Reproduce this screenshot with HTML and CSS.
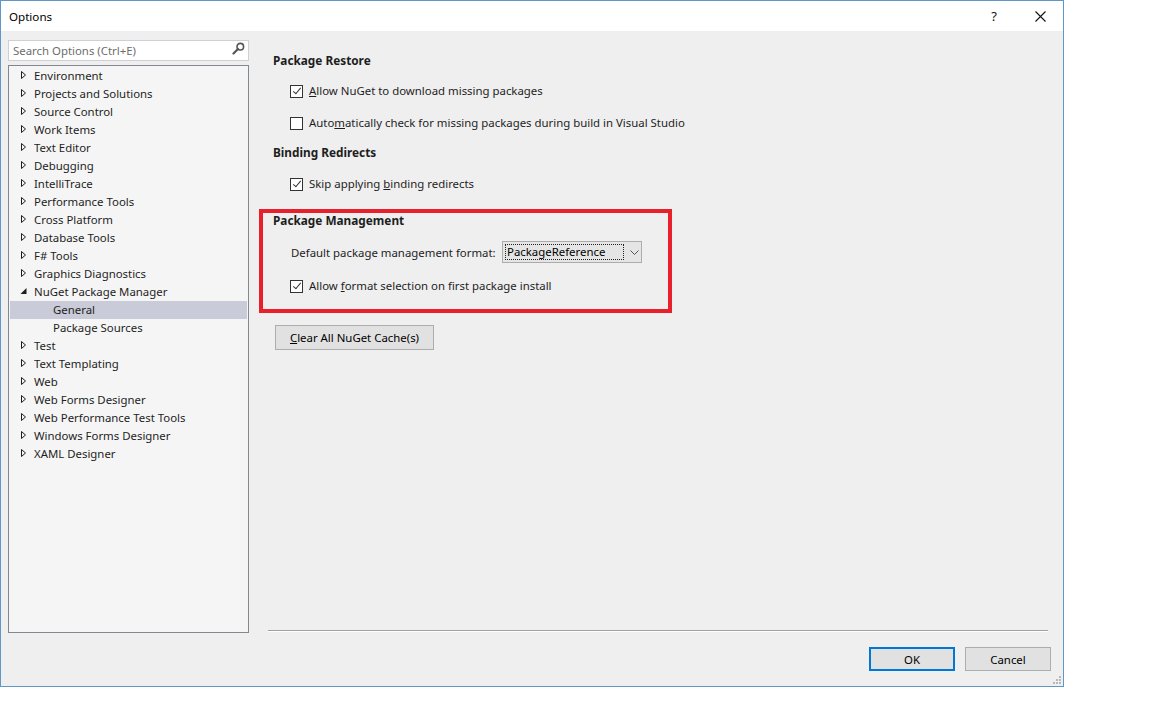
FILE: index.html
```html
<!DOCTYPE html>
<html>
<head>
<meta charset="utf-8">
<title>Options</title>
<link rel="stylesheet" href="styles.css">
</head>
<body>
<div class="window">
  <div class="titlebar">
    <span class="title">Options</span>
    <span class="tb-help">?</span>
    <span class="tb-close"><svg width="11" height="11" viewBox="0 0 11 11"><path d="M0.5 0.5 L10.5 10.5 M10.5 0.5 L0.5 10.5" stroke="#111" stroke-width="1.1" fill="none"/></svg></span>
  </div>
  <div class="client">
    <div class="main">
      <div class="leftpane">
        <div class="search">
          <span class="search-ph">Search Options (Ctrl+E)</span>
          <svg class="search-icon" width="13" height="13" viewBox="0 0 13 13"><circle cx="8.3" cy="4.7" r="3.3" stroke="#555" stroke-width="1.6" fill="none"/><path d="M6 7 L1.5 11.5" stroke="#555" stroke-width="2.2" stroke-linecap="round"/></svg>
        </div>
        <div class="tree">
          <div class="node"><svg class="arrow" viewBox="0 0 14 18"><path d="M1.5 5.5 L5.5 9 L1.5 12.5 Z" fill="none" stroke="#1e1e1e"/></svg>Environment</div>
          <div class="node"><svg class="arrow" viewBox="0 0 14 18"><path d="M1.5 5.5 L5.5 9 L1.5 12.5 Z" fill="none" stroke="#1e1e1e"/></svg>Projects and Solutions</div>
          <div class="node"><svg class="arrow" viewBox="0 0 14 18"><path d="M1.5 5.5 L5.5 9 L1.5 12.5 Z" fill="none" stroke="#1e1e1e"/></svg>Source Control</div>
          <div class="node"><svg class="arrow" viewBox="0 0 14 18"><path d="M1.5 5.5 L5.5 9 L1.5 12.5 Z" fill="none" stroke="#1e1e1e"/></svg>Work Items</div>
          <div class="node"><svg class="arrow" viewBox="0 0 14 18"><path d="M1.5 5.5 L5.5 9 L1.5 12.5 Z" fill="none" stroke="#1e1e1e"/></svg>Text Editor</div>
          <div class="node"><svg class="arrow" viewBox="0 0 14 18"><path d="M1.5 5.5 L5.5 9 L1.5 12.5 Z" fill="none" stroke="#1e1e1e"/></svg>Debugging</div>
          <div class="node"><svg class="arrow" viewBox="0 0 14 18"><path d="M1.5 5.5 L5.5 9 L1.5 12.5 Z" fill="none" stroke="#1e1e1e"/></svg>IntelliTrace</div>
          <div class="node"><svg class="arrow" viewBox="0 0 14 18"><path d="M1.5 5.5 L5.5 9 L1.5 12.5 Z" fill="none" stroke="#1e1e1e"/></svg>Performance Tools</div>
          <div class="node"><svg class="arrow" viewBox="0 0 14 18"><path d="M1.5 5.5 L5.5 9 L1.5 12.5 Z" fill="none" stroke="#1e1e1e"/></svg>Cross Platform</div>
          <div class="node"><svg class="arrow" viewBox="0 0 14 18"><path d="M1.5 5.5 L5.5 9 L1.5 12.5 Z" fill="none" stroke="#1e1e1e"/></svg>Database Tools</div>
          <div class="node"><svg class="arrow" viewBox="0 0 14 18"><path d="M1.5 5.5 L5.5 9 L1.5 12.5 Z" fill="none" stroke="#1e1e1e"/></svg>F# Tools</div>
          <div class="node"><svg class="arrow" viewBox="0 0 14 18"><path d="M1.5 5.5 L5.5 9 L1.5 12.5 Z" fill="none" stroke="#1e1e1e"/></svg>Graphics Diagnostics</div>
          <div class="node"><svg class="arrow" viewBox="0 0 14 18"><path d="M6.5 6 L6.5 12 L0.5 12 Z" fill="#1e1e1e"/></svg>NuGet Package Manager</div>
          <div class="node child selected">General</div>
          <div class="node child">Package Sources</div>
          <div class="node"><svg class="arrow" viewBox="0 0 14 18"><path d="M1.5 5.5 L5.5 9 L1.5 12.5 Z" fill="none" stroke="#1e1e1e"/></svg>Test</div>
          <div class="node"><svg class="arrow" viewBox="0 0 14 18"><path d="M1.5 5.5 L5.5 9 L1.5 12.5 Z" fill="none" stroke="#1e1e1e"/></svg>Text Templating</div>
          <div class="node"><svg class="arrow" viewBox="0 0 14 18"><path d="M1.5 5.5 L5.5 9 L1.5 12.5 Z" fill="none" stroke="#1e1e1e"/></svg>Web</div>
          <div class="node"><svg class="arrow" viewBox="0 0 14 18"><path d="M1.5 5.5 L5.5 9 L1.5 12.5 Z" fill="none" stroke="#1e1e1e"/></svg>Web Forms Designer</div>
          <div class="node"><svg class="arrow" viewBox="0 0 14 18"><path d="M1.5 5.5 L5.5 9 L1.5 12.5 Z" fill="none" stroke="#1e1e1e"/></svg>Web Performance Test Tools</div>
          <div class="node"><svg class="arrow" viewBox="0 0 14 18"><path d="M1.5 5.5 L5.5 9 L1.5 12.5 Z" fill="none" stroke="#1e1e1e"/></svg>Windows Forms Designer</div>
          <div class="node"><svg class="arrow" viewBox="0 0 14 18"><path d="M1.5 5.5 L5.5 9 L1.5 12.5 Z" fill="none" stroke="#1e1e1e"/></svg>XAML Designer</div>
        </div>
      </div>
      <div class="rightpane">
        <div class="options">
          <div class="heading h-restore">Package Restore</div>
          <div class="check row1"><span class="box checked"></span><span><u>A</u>llow NuGet to download missing packages</span></div>
          <div class="check row2"><span class="box"></span><span>Auto<u>m</u>atically check for missing packages during build in Visual Studio</span></div>
          <div class="heading h-binding">Binding Redirects</div>
          <div class="check row3"><span class="box checked"></span><span>Skip applying <u>b</u>inding redirects</span></div>
          <div class="heading h-mgmt">Package Management</div>
          <div class="combo-row">
            <span class="combo-label">Default package management format:</span>
            <div class="combo"><span class="combo-value">PackageReference</span><svg class="combo-arrow" width="9" height="5" viewBox="0 0 9 5"><path d="M0.5 0.5 L4.5 4.5 L8.5 0.5" stroke="#555" fill="none"/></svg></div>
          </div>
          <div class="check row4"><span class="box checked"></span><span>Allow <u>f</u>ormat selection on first package install</span></div>
          <button class="btn clear"><u>C</u>lear All NuGet Cache(s)</button>
          <div class="highlight"></div>
        </div>
        <div class="separator"></div>
      </div>
    </div>
    <div class="footer">
      <button class="btn ok">OK</button>
      <button class="btn cancel">Cancel</button>
    </div>
    <svg class="grip" width="10" height="10" viewBox="0 0 10 10"><g fill="#b8b8b8"><rect x="7" y="1" width="2" height="2"/><rect x="4" y="4" width="2" height="2"/><rect x="7" y="4" width="2" height="2"/><rect x="1" y="7" width="2" height="2"/><rect x="4" y="7" width="2" height="2"/><rect x="7" y="7" width="2" height="2"/></g></svg>
  </div>
</div>
</body>
</html>
```
FILE: styles.css
```css
* { box-sizing: border-box; }
html, body { margin: 0; padding: 0; background: #ffffff; }
body {
  font-family: "Segoe UI", "Noto Sans", "Open Sans", sans-serif;
  font-size: 11.4px;
  color: #1e1e1e;
}
.window {
  width: 1064px;
  height: 687px;
  border: 1px solid #5f97c9;
  background: #efefef;
  display: flex;
  flex-direction: column;
}
.titlebar {
  height: 30px;
  background: #ffffff;
  display: flex;
  align-items: center;
  padding-left: 8px;
  flex: none;
}
.title { font-size: 11.6px; color: #000; flex: 1; }
.tb-help { font-size: 13px; color: #111; width: 46px; text-align: center; margin-right: 0; }
.tb-close { width: 46px; display: flex; justify-content: center; align-items: center; }
.client {
  flex: 1;
  padding: 9px 12px 0 7px;
  display: flex;
  flex-direction: column;
  position: relative;
}
.main { display: flex; height: 593px; }
.leftpane { width: 241px; display: flex; flex-direction: column; }
.search {
  height: 21px;
  border: 1px solid #cfd0d6;
  background: #ffffff;
  display: flex;
  align-items: center;
  padding: 0 2px 0 4px;
  margin-bottom: 4px;
}
.search-ph { flex: 1; color: #6d6d6d; white-space: nowrap; }
.search-icon { margin-right: 1px; margin-top: -4px; }
.tree {
  height: 568px;
  border: 1px solid #828790;
  background: #f5f5f5;
  padding: 1px 1px 0 1px;
}
.node {
  height: 18px;
  line-height: 17px;
  display: flex;
  align-items: flex-start;
  padding-left: 10px;
  white-space: nowrap;
}
.node.child { padding-left: 43px; }
.node.selected { background: #cacbd8; }
.arrow {
  width: 14px;
  height: 18px;
  flex: none;
  margin-top: -1px;
}
.rightpane {
  margin-left: 19px;
  width: 780px;
  display: flex;
  flex-direction: column;
}
.options {
  flex: 1;
  position: relative;
  padding: 12px 0 0 5px;
}
.heading { font-weight: bold; font-size: 11.8px; height: 16px; line-height: 16px; color: #1e1e1e; }
.check {
  display: flex;
  align-items: center;
  height: 16px;
  line-height: 16px;
  padding-left: 17px;
  white-space: nowrap;
}
.box {
  width: 13px; height: 13px;
  border: 1px solid #333;
  background: #ffffff;
  margin-right: 6px;
  position: relative;
  flex: none;
}
.box.checked::after {
  content: "";
  position: absolute;
  left: 3.5px; top: 0.5px;
  width: 3px; height: 7px;
  border-right: 1.3px solid #333;
  border-bottom: 1.3px solid #333;
  transform: rotate(40deg);
}
.row1 { margin-top: 15px; }
.row2 { margin-top: 16px; }
.h-binding { margin-top: 13px; }
.row3 { margin-top: 16px; }
.h-mgmt { margin-top: 20px; }
.combo-row {
  margin-top: 13px;
  display: flex;
  align-items: center;
  height: 22px;
  padding-left: 18px;
}
.combo-label { width: 211px; white-space: nowrap; }
.combo {
  width: 140px;
  height: 22px;
  background: #e5e5e5;
  border: 1px solid #acacac;
  display: flex;
  align-items: center;
  padding: 2px;
}
.combo-value {
  width: 119px;
  height: 16px;
  line-height: 14px;
  border: 1px dotted #222;
  padding-left: 1px;
  color: #000;
}
.combo-arrow { margin-left: 6px; }
.row4 { margin-top: 15px; }
.btn {
  font-family: "Segoe UI", "Noto Sans", "Open Sans", sans-serif;
  font-size: 11.4px;
  color: #000;
  background: #e1e1e1;
  border: 1px solid #adadad;
  padding: 0;
  height: 24px;
}
.clear { margin-top: 31px; margin-left: 2px; width: 159px; height: 25px; display: block; }
.highlight {
  position: absolute;
  left: -9px;
  top: 169px;
  width: 413px;
  height: 104px;
  border: 4px solid #e8202b;
  pointer-events: none;
}
.separator {
  height: 2px;
  border-top: 1px solid #a0a0a0;
  border-bottom: 1px solid #ffffff;
  margin-bottom: 1px;
}
.footer {
  display: flex;
  justify-content: flex-end;
  padding-top: 14px;
  gap: 10px;
}
.ok { width: 86px; border: 2px solid #0078d7; }
.cancel { width: 86px; }
.grip { position: absolute; right: 1px; bottom: 1px; }
```
